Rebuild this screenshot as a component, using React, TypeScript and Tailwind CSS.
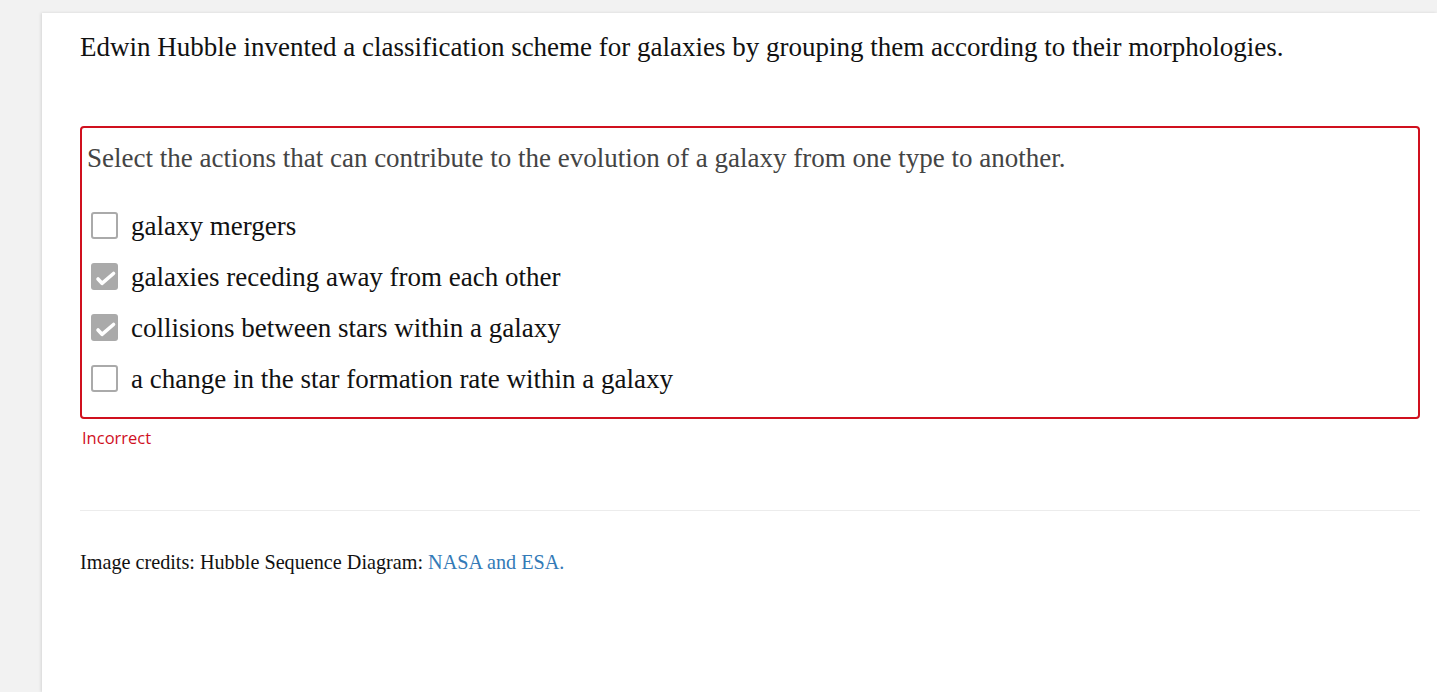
import React from "react";

const options = [
  { label: "galaxy mergers", checked: false },
  { label: "galaxies receding away from each other", checked: true },
  { label: "collisions between stars within a galaxy", checked: true },
  { label: "a change in the star formation rate within a galaxy", checked: false },
];

function Box({ checked }: { checked: boolean }) {
  if (checked) {
    return (
      <span className="mt-[4px] block h-[27px] w-[27px] shrink-0 rounded-[3px] bg-[#aaaaaa]">
        <svg width="27" height="27" viewBox="0 0 27 27">
          <path d="M7 16 L11 20.3 L22.5 10.5" fill="none" stroke="white" strokeWidth="3.6" strokeLinecap="round" strokeLinejoin="round" />
        </svg>
      </span>
    );
  }
  return <span className="mt-[4px] block h-[27px] w-[27px] shrink-0 rounded-[3px] border-[2.5px] border-[#aaaaaa] bg-white" />;
}

export default function App() {
  return (
    <div className="min-h-[692px] bg-[#f2f2f2] pt-[13px] pl-[42px]">
      <div className="min-h-[679px] bg-white pl-[38px] pr-[17px] pt-[19px] shadow-[-1px_0_3px_rgba(0,0,0,0.12)]" style={{ fontFamily: '"Liberation Serif", "Times New Roman", serif' }}>
        <p className="text-[27px] leading-[31px] text-[#111]">
          Edwin Hubble invented a classification scheme for galaxies by grouping them according to their morphologies.
        </p>
        <div className="mt-[63px] rounded-[4px] border-2 border-[#d0101e] pl-[5px] pt-[15px] pb-[25px]">
          <p className="text-[27px] leading-[31px] text-[#444]">
            Select the actions that can contribute to the evolution of a galaxy from one type to another.
          </p>
          <div className="mt-[34px] flex flex-col gap-[20px] pl-[4px]">
            {options.map((o) => (
              <label key={o.label} className="flex h-[31px] items-start gap-[13px]">
                <Box checked={o.checked} />
                <span className="mt-[3px] text-[27px] leading-[31px] text-[#111]">{o.label}</span>
              </label>
            ))}
          </div>
        </div>
        <p className="mt-[8px] pl-[2px] text-[16.5px] leading-[22px] text-[#d0101e]" style={{ fontFamily: '"Open Sans", sans-serif' }}>
          Incorrect
        </p>
        <div className="mt-[61px] h-px bg-[#ececec]" />
        <p className="mt-[39px] text-[20.2px] leading-[24px] text-[#111]">
          Image credits: Hubble Sequence Diagram: <a className="text-[#337ab7]">NASA and ESA.</a>
        </p>
      </div>
    </div>
  );
}
